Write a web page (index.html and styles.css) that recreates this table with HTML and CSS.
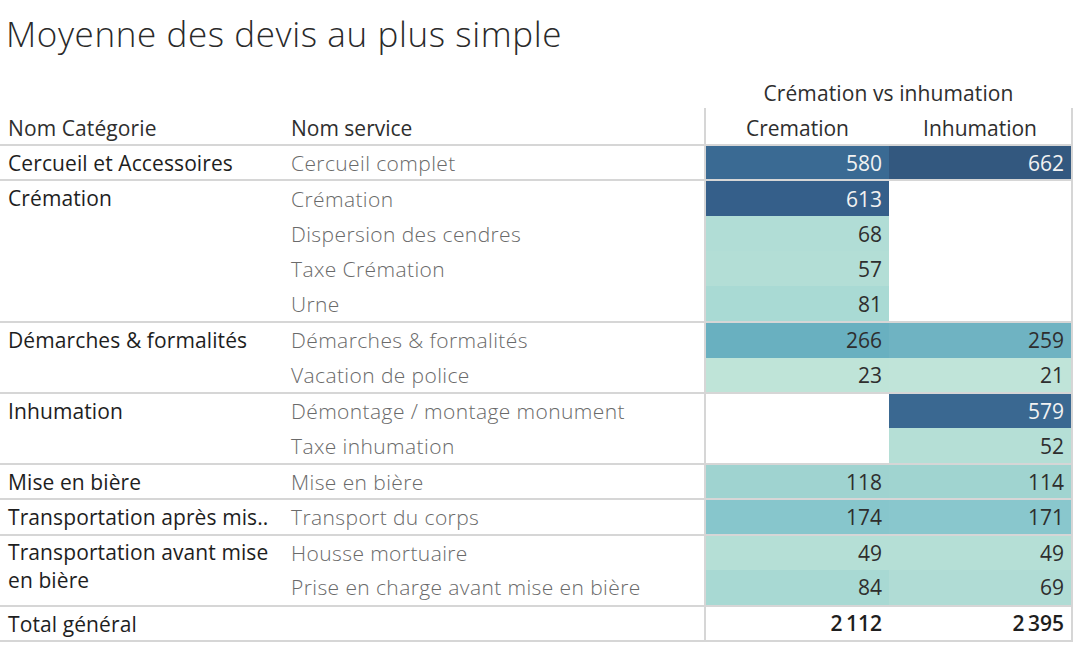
FILE: index.html
```html
<!DOCTYPE html>
<html lang="fr">
<head>
<meta charset="utf-8">
<title>Moyenne des devis au plus simple</title>
<link rel="stylesheet" href="styles.css">
</head>
<body>
<h1 class="title">Moyenne des devis au plus simple</h1>
<div class="crosstab">
  <div class="superhead">Crémation vs inhumation</div>
  <div class="headrow">
    <div class="cat">Nom Catégorie</div>
    <div class="svc head">Nom service</div>
    <div class="num first center">Cremation</div>
    <div class="num last center">Inhumation</div>
  </div>

  <div class="group g1">
    <div class="cat">Cercueil et Accessoires</div>
    <div class="rows">
      <div class="row"><div class="svc">Cercueil complet</div><div class="num first dark" style="background:#3a6a93">580</div><div class="num last dark" style="background:#33587f">662</div></div>
    </div>
  </div>

  <div class="group g4">
    <div class="cat">Crémation</div>
    <div class="rows">
      <div class="row"><div class="svc">Crémation</div><div class="num first dark" style="background:#355f8a">613</div><div class="num last"></div></div>
      <div class="row"><div class="svc">Dispersion des cendres</div><div class="num first" style="background:#b1ddd6">68</div><div class="num last"></div></div>
      <div class="row"><div class="svc">Taxe Crémation</div><div class="num first" style="background:#b3ded6">57</div><div class="num last"></div></div>
      <div class="row"><div class="svc">Urne</div><div class="num first" style="background:#a9dad4">81</div><div class="num last"></div></div>
    </div>
  </div>

  <div class="group g2">
    <div class="cat">Démarches &amp; formalités</div>
    <div class="rows">
      <div class="row"><div class="svc">Démarches &amp; formalités</div><div class="num first" style="background:#69b0c0">266</div><div class="num last" style="background:#6fb3c2">259</div></div>
      <div class="row"><div class="svc">Vacation de police</div><div class="num first" style="background:#bfe4d8">23</div><div class="num last" style="background:#c0e4d9">21</div></div>
    </div>
  </div>

  <div class="group g2">
    <div class="cat">Inhumation</div>
    <div class="rows">
      <div class="row"><div class="svc">Démontage / montage monument</div><div class="num first"></div><div class="num last dark" style="background:#3a6891">579</div></div>
      <div class="row"><div class="svc">Taxe inhumation</div><div class="num first"></div><div class="num last" style="background:#b5dfd6">52</div></div>
    </div>
  </div>

  <div class="group g1">
    <div class="cat">Mise en bière</div>
    <div class="rows">
      <div class="row"><div class="svc">Mise en bière</div><div class="num first" style="background:#9fd3d0">118</div><div class="num last" style="background:#a0d4d0">114</div></div>
    </div>
  </div>

  <div class="group g1">
    <div class="cat">Transportation après mis..</div>
    <div class="rows">
      <div class="row"><div class="svc">Transport du corps</div><div class="num first" style="background:#87c6cc">174</div><div class="num last" style="background:#89c7cd">171</div></div>
    </div>
  </div>

  <div class="group g2">
    <div class="cat wrap">Transportation avant mise<br>en bière</div>
    <div class="rows">
      <div class="row"><div class="svc">Housse mortuaire</div><div class="num first" style="background:#b5dfd6">49</div><div class="num last" style="background:#b5dfd6">49</div></div>
      <div class="row"><div class="svc">Prise en charge avant mise en bière</div><div class="num first" style="background:#a8d9d3">84</div><div class="num last" style="background:#b0dcd5">69</div></div>
    </div>
  </div>

  <div class="group g1 total">
    <div class="cat">Total général</div>
    <div class="rows">
      <div class="row"><div class="svc"></div><div class="num first">2&thinsp;112</div><div class="num last">2&thinsp;395</div></div>
    </div>
  </div>
</div>
</body>
</html>
```

FILE: styles.css
```css
* { box-sizing: border-box; }

body {
  margin: 0;
  background: #ffffff;
  font-family: "Open Sans", "Noto Sans", sans-serif;
  color: #333333;
}

.title {
  margin: 0;
  height: 78px;
  padding-left: 6px;
  font-size: 35px;
  font-weight: 300;
  line-height: 68px;
  color: #2a2a2a;
  letter-spacing: 0.6px;
  white-space: nowrap;
}

.crosstab {
  width: 1073px;
  font-size: 21px;
}

.superhead {
  margin-left: 706px;
  width: 365px;
  height: 30px;
  line-height: 30px;
  text-align: center;
  color: #2e2e2e;
  letter-spacing: 0.1px;
}

.headrow {
  display: grid;
  grid-template-columns: 283px 421px 185px 184px;
  height: 38px;
  border-bottom: 2px solid #d6d6d6;
}

.headrow > div {
  padding-top: 4px;
  line-height: 32px;
}

.headrow .cat {
  color: #2e2e2e;
  font-weight: 400;
}

.headrow .svc.head {
  color: #2e2e2e;
  font-weight: 400;
  letter-spacing: 0;
}

.group {
  display: grid;
  grid-template-columns: 283px 1fr;
  border-bottom: 2px solid #d6d6d6;
}

.g1 { height: 35.43px; }
.g2 { height: 70.86px; }
.g4 { height: 141.72px; }

.cat {
  padding-left: 8px;
  padding-top: 1px;
  font-weight: 500;
  color: #1e1e1e;
  line-height: 32px;
  white-space: nowrap;
  letter-spacing: 0.1px;
}

.cat.wrap {
  line-height: 28px;
  padding-top: 2px;
}

.rows {
  display: grid;
  grid-auto-rows: 1fr;
}

.row {
  display: grid;
  grid-template-columns: 421px 185px 184px;
}

.svc {
  padding-left: 8px;
  font-weight: 300;
  color: #6a6a6a;
  display: flex;
  align-items: center;
  white-space: nowrap;
  letter-spacing: 0.4px;
}

.num {
  display: flex;
  align-items: center;
  justify-content: flex-end;
  padding-right: 7px;
  color: #2e2e2e;
}

.num.first { border-left: 2px solid #d6d6d6; }
.num.last { border-right: 2px solid #d6d6d6; }

.num.center {
  display: block;
  text-align: center;
  padding-right: 0;
}

.num.dark { color: #f2f2f2; }

.total .cat {
  font-weight: 500;
  color: #1e1e1e;
}

.total .num {
  font-weight: 600;
  color: #1e1e1e;
}
```
